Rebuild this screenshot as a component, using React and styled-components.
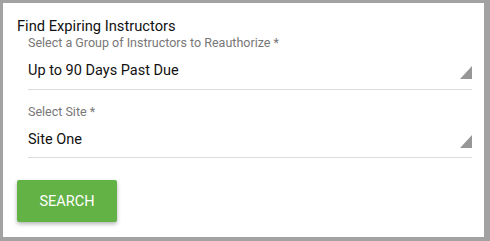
import React from 'react'
import styled, { createGlobalStyle } from 'styled-components'

const GlobalStyle = createGlobalStyle`
  html, body {
    margin: 0;
    padding: 0;
    background: #a2a2a2;
  }
  body {
    font-family: Roboto, "Liberation Sans", sans-serif;
  }
`

const Frame = styled.div`
  width: 490px;
  height: 241px;
  box-sizing: border-box;
  padding: 3px 6px 4px 3px;
`

const Card = styled.div`
  height: 100%;
  box-sizing: border-box;
  background: #fff;
  padding: 15px 12px 0 14px;
  display: flex;
  flex-direction: column;
`

const Title = styled.div`
  font-size: 14.7px;
  line-height: 17px;
  color: #111;
`

const Field = styled.div`
  margin-left: 11px;
  margin-top: ${(p) => p.$gap}px;
  display: flex;
  flex-direction: column;
  border-bottom: 1px solid #dcdcdc;
  padding-bottom: ${(p) => p.$pad}px;
`

const Label = styled.div`
  font-size: 12.5px;
  line-height: 16px;
  color: #777;
`

const Select = styled.div`
  margin-top: 10px;
  display: flex;
  align-items: center;
  justify-content: space-between;
  font-size: 14.5px;
  line-height: 20px;
  color: #111;
`

const Arrow = styled.svg`
  width: 12px;
  height: 13px;
  margin-top: 2px;
  fill: #979797;
`

const Button = styled.button`
  margin: 22px 0 0 0;
  width: 100px;
  height: 42px;
  border: none;
  border-radius: 2px;
  background: #63b246;
  color: #fff;
  font-family: Roboto, "Liberation Sans", sans-serif;
  font-size: 14.5px;
  text-transform: uppercase;
  box-shadow: 0 2px 4px rgba(0, 0, 0, 0.3);
  cursor: pointer;
`

function Dropdown({ label, value, gap, pad }) {
  return (
    <Field $gap={gap} $pad={pad}>
      <Label>{label}</Label>
      <Select>
        <span>{value}</span>
        <Arrow viewBox="0 0 12 13">
          <polygon points="12,0 12,13 0,13" />
        </Arrow>
      </Select>
    </Field>
  )
}

export default function App() {
  return (
    <Frame>
      <GlobalStyle />
      <Card>
        <Title>Find Expiring Instructors</Title>
        <Dropdown
          label="Select a Group of Instructors to Reauthorize *"
          value="Up to 90 Days Past Due"
          gap={0}
          pad={8}
        />
        <Dropdown label="Select Site *" value="Site One" gap={14} pad={7} />
        <div>
          <Button>Search</Button>
        </div>
      </Card>
    </Frame>
  )
}
